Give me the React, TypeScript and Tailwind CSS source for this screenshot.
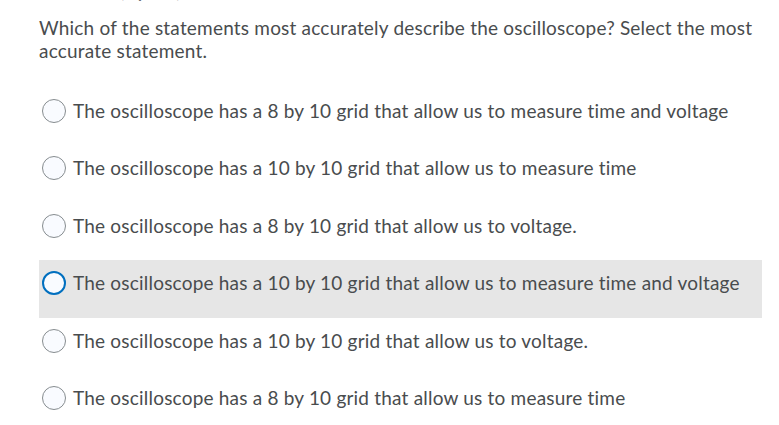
import React from "react";

const options = [
  "The oscilloscope has a 8 by 10 grid that allow us to measure time and voltage",
  "The oscilloscope has a 10 by 10 grid that allow us to measure time",
  "The oscilloscope has a 8 by 10 grid that allow us to voltage.",
  "The oscilloscope has a 10 by 10 grid that allow us to measure time and voltage",
  "The oscilloscope has a 10 by 10 grid that allow us to voltage.",
  "The oscilloscope has a 8 by 10 grid that allow us to measure time",
];

export default function App() {
  return (
    <div
      className="w-[779px] h-[425px] overflow-hidden bg-white text-[#494c4e] tracking-[0.2px]"
      style={{ fontFamily: "Lato, 'Noto Sans', sans-serif" }}
    >
      <div className="h-[4px] overflow-hidden relative">
        <div className="absolute left-[35px] top-[-18px] text-[16px] leading-[20px] font-bold text-[#6e7376]">
          Question 3 (1 point)
        </div>
      </div>
      <div className="pl-[39px] pr-[17px]">
        <p className="mt-[11.5px] text-[19px] leading-[23px]">
          Which of the statements most accurately describe the oscilloscope? Select the most
          accurate statement.
        </p>
        <div className="mt-[26.5px] flex flex-col">
          {options.map((o, i) => {
            const sel = i === 3;
            return (
              <div
                key={i}
                className={`h-[57.4px] flex items-start pt-[11px] pl-[3px] ${sel ? "bg-[#e6e6e6]" : ""}`}
              >
                <span
                  className={`shrink-0 w-[24px] h-[24px] rounded-full bg-[#f9fbff] ${
                    sel ? "border-2 border-[#006fbf]" : "border border-[#868c8f]"
                  }`}
                />
                <span className="ml-[7px] text-[19px] leading-[23px]">{o}</span>
              </div>
            );
          })}
        </div>
      </div>
    </div>
  );
}
